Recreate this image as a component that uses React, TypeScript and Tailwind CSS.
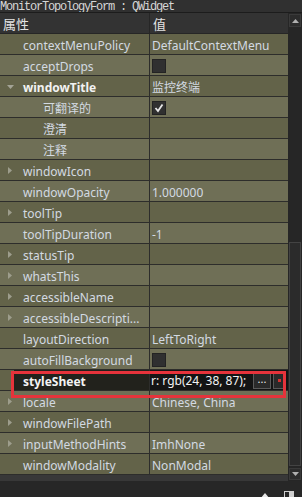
import React from "react";

type Row = {
  name: string;
  value?: string;
  arrow?: "right" | "down";
  bold?: boolean;
  indent?: boolean;
  check?: "on" | "off";
  editor?: boolean;
};

const rows: Row[] = [
  { name: "contextMenuPolicy", value: "DefaultContextMenu" },
  { name: "acceptDrops", check: "off" },
  { name: "windowTitle", value: "监控终端", arrow: "down", bold: true },
  { name: "可翻译的", indent: true, check: "on" },
  { name: "澄清", indent: true },
  { name: "注释", indent: true },
  { name: "windowIcon", arrow: "right" },
  { name: "windowOpacity", value: "1.000000" },
  { name: "toolTip", arrow: "right" },
  { name: "toolTipDuration", value: "-1" },
  { name: "statusTip", arrow: "right" },
  { name: "whatsThis", arrow: "right" },
  { name: "accessibleName", arrow: "right" },
  { name: "accessibleDescripti...", arrow: "right" },
  { name: "layoutDirection", value: "LeftToRight" },
  { name: "autoFillBackground", check: "off" },
  { name: "styleSheet", bold: true, editor: true },
  { name: "locale", value: "Chinese, China", arrow: "right" },
  { name: "windowFilePath", arrow: "right" },
  { name: "inputMethodHints", value: "ImhNone", arrow: "right" },
  { name: "windowModality", value: "NonModal" },
];

const font = { fontFamily: '"Noto Sans", "Noto Sans CJK SC", sans-serif' };

function Arrow({ dir }: { dir: "right" | "down" }) {
  if (dir === "down")
    return (
      <svg width="7" height="5" viewBox="0 0 7 5" className="absolute left-[7px] top-[9px]">
        <path d="M0 0 L7 0 L3.5 4 Z" fill="#a3a396" />
      </svg>
    );
  return (
    <svg width="4" height="7" viewBox="0 0 4 7" className="absolute left-[8px] top-[7px]">
      <path d="M0 0 L4 3.5 L0 7 Z" fill="#9d9d8c" />
    </svg>
  );
}

function Check({ on }: { on: boolean }) {
  return (
    <div className="w-[14px] h-[14px] bg-[#303030] border border-[#232323] flex items-center justify-center">
      {on && (
        <svg width="10" height="10" viewBox="0 0 10 10">
          <path d="M1.5 5 L4 8 L8.5 1.5" stroke="#e6e6e6" strokeWidth="1.8" fill="none" />
        </svg>
      )}
    </div>
  );
}

export default function App() {
  return (
    <div className="relative w-[302px] h-[497px] bg-[#272727] overflow-hidden" style={font}>
      {/* title */}
      <div
        className="h-[13px] overflow-hidden bg-[#303030] text-[#d6d6d6] text-[12px] tracking-[-1.2px] leading-[15px] whitespace-nowrap border-b border-[#1c1c1c]"
        style={{ fontFamily: '"Liberation Mono", monospace' }}
      >
        MonitorTopologyForm : QWidget
      </div>
      <div className="flex">
        <div className="w-[288px] flex flex-col">
          {/* header */}
          <div className="h-[21px] flex bg-[#333333] border-b border-[#262626] text-[13px] text-[#e4e4e4]">
            <div className="w-[150px] border-r border-[#262626] pl-[3px] leading-[22px]">属性</div>
            <div className="flex-1 pl-[3px] leading-[22px]">值</div>
          </div>
          {rows.map((r, i) => {
            const bg = i % 2 === 0 ? "bg-[#636349]" : "bg-[#6f6f56]";
            return (
              <div key={r.name} className={`h-[21px] flex border-b border-[#2d2d2b] ${bg} text-[12px] text-[#d3dae2]`}>
                <div className="relative w-[150px] shrink-0 border-r border-[#2d2d2b] h-[20px] whitespace-nowrap">
                  {r.editor ? (
                    <div className="ml-[14px] h-[20px] bg-[#22221c] pl-[9px] leading-[23px] font-bold text-[#f4f4f4]">
                      {r.name}
                    </div>
                  ) : (
                    <div
                      className={`h-[20px] leading-[23px] ${r.indent ? "pl-[43px]" : "pl-[23px]"} ${
                        r.bold ? "font-bold text-[#f2f2f2]" : ""
                      }`}
                    >
                      {r.arrow && <Arrow dir={r.arrow} />}
                      {r.name}
                    </div>
                  )}
                </div>
                <div className="flex-1 h-[20px] whitespace-nowrap overflow-hidden flex items-center">
                  {r.editor ? (
                    <div className="flex items-center w-full h-[20px] bg-[#141414]">
                      <span className="pl-[1px] text-[#f2f2f2] w-[102px] overflow-hidden leading-[23px]">
                        r: rgb(24, 38, 87);
                      </span>
                      <div className="ml-[1px] w-[18px] h-[17px] border border-[#5a5a5a] bg-[#2a2a2a] text-[#e6e6e6] text-[11px] leading-[12px] text-center">
                        ...
                      </div>
                      <div className="ml-[2px] w-[12px] h-[17px] border border-[#5a5a5a] bg-[#2a2a2a] flex items-center justify-center">
                        <span className="block w-[3px] h-[3px] bg-[#d03030]" />
                      </div>
                    </div>
                  ) : r.check ? (
                    <div className="pl-[2px] pt-[1px]">
                      <Check on={r.check === "on"} />
                    </div>
                  ) : (
                    <span className="pl-[2px] leading-[23px] h-[20px]">{r.value ?? ""}</span>
                  )}
                </div>
              </div>
            );
          })}
          <div className="h-[6px] bg-[#383838]" />
        </div>
        {/* scrollbar */}
        <div className="w-[14px] bg-[#262626] flex flex-col pt-[1px]">
          <div className="h-[13px] mx-[1px] bg-[#2c2c2c] border border-[#3a3a3a] flex items-center justify-center">
            <svg width="7" height="4" viewBox="0 0 7 4">
              <path d="M0 4 L3.5 0 L7 4 Z" fill="#b0b0b0" />
            </svg>
          </div>
          <div className="h-[215px]" />
          <div className="h-[224px] mx-[1px] bg-[#2b2b2b] border border-[#434343]" />
          <div className="h-[2px]" />
          <div className="h-[12px] mx-[1px] bg-[#2c2c2c] border border-[#3a3a3a] flex items-center justify-center">
            <svg width="7" height="4" viewBox="0 0 7 4">
              <path d="M0 0 L7 0 L3.5 4 Z" fill="#b0b0b0" />
            </svg>
          </div>
        </div>
      </div>
      {/* bottom status icons */}
      <div className="flex justify-end items-end gap-[14px] pr-[8px] pt-[10px]">
        <svg width="10" height="6" viewBox="0 0 10 6">
          <path d="M0 6 L5 0 L10 6 Z" fill="#e8e8e8" />
        </svg>
        <div className="w-[10px] h-[8px] border border-[#d0d0d0] border-b-0 flex justify-end">
          <div className="w-[4px] bg-[#d0d0d0]" />
        </div>
      </div>
      {/* annotation box */}
      <div className="absolute left-[11px] top-[371px] w-[275px] h-[27px] border-[3px] border-[#e6333b] pointer-events-none" />
    </div>
  );
}
